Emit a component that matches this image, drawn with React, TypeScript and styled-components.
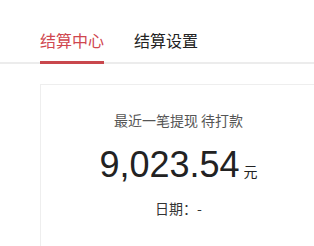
import React from "react";
import styled, { createGlobalStyle } from "styled-components";

const GlobalStyle = createGlobalStyle`
  html, body {
    margin: 0;
    padding: 0;
    background: #fff;
    overflow: hidden;
    font-family: "Noto Sans CJK SC", "Liberation Sans", sans-serif;
  }
`;

const Page = styled.div`
  width: 314px;
  height: 246px;
  overflow: hidden;
  padding-top: 23px;
  box-sizing: border-box;
`;

const TabBar = styled.div`
  display: flex;
  gap: 30px;
  padding-left: 40px;
  border-bottom: 2px solid #ececec;
`;

const Tab = styled.div<{ $active?: boolean }>`
  font-size: 16px;
  line-height: 24px;
  padding: 5px 0 9px;
  margin-bottom: -2px;
  color: ${(p) => (p.$active ? "#d0474f" : "#222")};
  border-bottom: 3px solid ${(p) => (p.$active ? "#c9474d" : "transparent")};
`;

const Card = styled.div`
  margin: 20px 0 0 40px;
  width: 276px;
  height: 200px;
  border: 1px solid #eee;
  border-right: none;
  display: flex;
  flex-direction: column;
  align-items: center;
  padding-top: 25px;
  box-sizing: border-box;
`;

const Label = styled.div`
  font-size: 14px;
  line-height: 20px;
  color: #555;
`;

const Amount = styled.div`
  display: flex;
  align-items: baseline;
  margin-top: 13px;
  color: #222;
`;

const Figure = styled.span`
  font-family: "Liberation Sans", sans-serif;
  font-size: 36px;
  line-height: 44px;
`;

const Unit = styled.span`
  font-size: 14px;
  margin-left: 4px;
`;

const DateRow = styled.div`
  font-size: 14px;
  line-height: 20px;
  color: #333;
  margin-top: 11px;
`;

export default function App() {
  return (
    <Page>
      <GlobalStyle />
      <TabBar>
        <Tab $active>结算中心</Tab>
        <Tab>结算设置</Tab>
      </TabBar>
      <Card>
        <Label>最近一笔提现 待打款</Label>
        <Amount>
          <Figure>9,023.54</Figure>
          <Unit>元</Unit>
        </Amount>
        <DateRow>日期：-</DateRow>
      </Card>
    </Page>
  );
}
